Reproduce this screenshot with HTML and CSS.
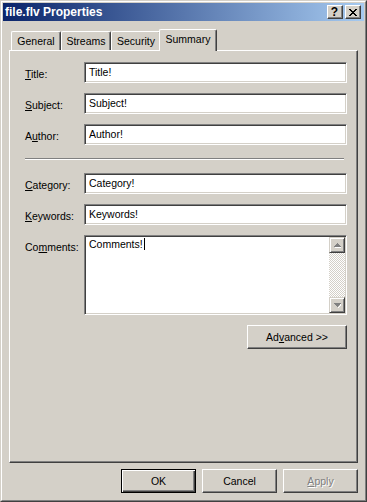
FILE: index.html
```html
<!DOCTYPE html>
<html lang="en">
<head>
<meta charset="utf-8">
<title>file.flv Properties</title>
<link rel="stylesheet" href="styles.css">
</head>
<body>
<div class="window">
  <div class="frame">
    <div class="titlebar">
      <span class="title">file.flv Properties</span>
      <div class="caption-buttons">
        <div class="cap-btn help">?</div>
        <div class="cap-btn close">
          <svg width="8" height="7" viewBox="0 0 8 7" shape-rendering="crispEdges"><path d="M0 0h2v1H0zM6 0h2v1H6zM1 1h2v1H1zM5 1h2v1H5zM2 2h4v1H2zM3 3h2v1H3zM2 4h4v1H2zM1 5h2v1H1zM5 5h2v1H5zM0 6h2v1H0zM6 6h2v1H6z" fill="#000"/></svg>
        </div>
      </div>
    </div>

    <div class="tabs">
      <div class="tab tab-general">General</div>
      <div class="tab tab-streams">Streams</div>
      <div class="tab tab-security">Security</div>
      <div class="tab tab-summary selected">Summary</div>
    </div>

    <div class="panel">
      <div class="form">
        <label class="lbl"><u>T</u>itle:</label>
        <div class="field">Title!</div>
        <label class="lbl"><u>S</u>ubject:</label>
        <div class="field">Subject!</div>
        <label class="lbl">A<u>u</u>thor:</label>
        <div class="field">Author!</div>
        <div class="sep"></div>
        <label class="lbl"><u>C</u>ategory:</label>
        <div class="field">Category!</div>
        <label class="lbl"><u>K</u>eywords:</label>
        <div class="field">Keywords!</div>
        <label class="lbl">Co<u>m</u>ments:</label>
        <div class="memo">
          <div class="memo-text">Comments!<span class="caret"></span></div>
          <div class="scrollbar">
            <div class="sb-btn">
              <svg width="7" height="5" viewBox="0 0 7 5" shape-rendering="crispEdges"><path d="M4 1h1v1H4zM5 2h1v1H5zM6 3h1v1H6zM1 4h7v1H1z" fill="#fff"/><path d="M3 0h1v1H3zM2 1h3v1H2zM1 2h5v1H1zM0 3h7v1H0z" fill="#808080"/></svg>
            </div>
            <div class="sb-track"></div>
            <div class="sb-btn">
              <svg width="7" height="5" viewBox="0 0 7 5" shape-rendering="crispEdges"><path d="M1 1h7v1H1zM6 2h1v1H6zM5 3h1v1H5zM4 4h1v1H4z" fill="#fff"/><path d="M0 0h7v1H0zM1 1h5v1H1zM2 2h3v1H2zM3 3h1v1H3z" fill="#808080"/></svg>
            </div>
          </div>
        </div>
      </div>
      <div class="adv-row">
        <div class="btn adv">Ad<u>v</u>anced &gt;&gt;</div>
      </div>
    </div>

    <div class="dlg-buttons">
      <div class="btn default">OK</div>
      <div class="btn">Cancel</div>
      <div class="btn disabled"><u>A</u>pply</div>
    </div>
  </div>
</div>
</body>
</html>
```

FILE: styles.css
```css
html, body {
  margin: 0;
  padding: 0;
  background: #D4D0C8;
}

body {
  font-family: "Liberation Sans", Arial, sans-serif;
  font-size: 10.5px;
  color: #000;
}

.window {
  width: 367px;
  height: 502px;
  box-sizing: border-box;
  border: 1px solid;
  border-color: #D4D0C8 #404040 #404040 #D4D0C8;
  background: #D4D0C8;
}

.frame {
  height: 100%;
  box-sizing: border-box;
  border: 1px solid;
  border-color: #FFFFFF #808080 #808080 #FFFFFF;
  padding: 1px;
  display: flex;
  flex-direction: column;
}

/* Title bar */
.titlebar {
  flex: none;
  height: 18px;
  display: flex;
  align-items: center;
  justify-content: space-between;
  padding: 0 3px 0 2px;
  background: linear-gradient(to right, #0A246A, #A6CAF0);
}

.title {
  color: #fff;
  font-weight: bold;
  font-size: 12px;
  white-space: nowrap;
}

.caption-buttons {
  display: flex;
  gap: 2px;
}

.cap-btn {
  width: 16px;
  height: 14px;
  box-sizing: border-box;
  background: #D4D0C8;
  border: 1px solid;
  border-color: #FFFFFF #404040 #404040 #FFFFFF;
  box-shadow: inset -1px -1px #808080;
  display: flex;
  align-items: center;
  justify-content: center;
}

.help {
  font-weight: bold;
  font-size: 12px;
  line-height: 12px;
  padding-right: 1px;
}

.close svg {
  display: block;
}

/* Tabs */
.tabs {
  flex: none;
  display: flex;
  align-items: flex-end;
  height: 21px;
  margin: 8px 0 0 8px;
  position: relative;
  z-index: 1;
}

.tab {
  box-sizing: border-box;
  height: 19px;
  padding-top: 3px;
  line-height: 13px;
  text-align: center;
  background: #D4D0C8;
  border-top: 1px solid #FFFFFF;
  border-left: 1px solid #FFFFFF;
  border-right: 1px solid #404040;
  box-shadow: inset -1px 0 #808080;
  border-top-left-radius: 2px;
  border-top-right-radius: 2px;
}

.tab-general { width: 50px; }
.tab-streams { width: 50px; }
.tab-security { width: 50px; }

.tab.selected {
  width: 58px;
  height: 22px;
  margin: 0 0 -1px -2px;
  padding-top: 3px;
  position: relative;
  z-index: 2;
}

/* Tab panel */
.panel {
  flex: none;
  height: 413px;
  margin: 0 6px;
  box-sizing: border-box;
  border: 1px solid;
  border-color: #FFFFFF #404040 #404040 #FFFFFF;
  box-shadow: inset -1px -1px #808080;
  padding: 11px 10px 0 15px;
}

.form {
  display: grid;
  grid-template-columns: 59px 1fr;
  row-gap: 10px;
}

.lbl {
  line-height: 13px;
  padding-top: 6px;
  white-space: nowrap;
}

.field {
  height: 21px;
  box-sizing: border-box;
  background: #fff;
  border: 1px solid;
  border-color: #808080 #FFFFFF #FFFFFF #808080;
  box-shadow: inset 1px 1px #404040, inset -1px -1px #D4D0C8;
  padding: 1px 4px 0 4px;
  line-height: 17px;
  white-space: nowrap;
}

.sep {
  grid-column: 1 / 3;
  height: 0;
  border-top: 1px solid #808080;
  border-bottom: 1px solid #FFFFFF;
  margin: 3px 3px 3px 0;
}

.memo {
  height: 80px;
  box-sizing: border-box;
  background: #fff;
  border: 1px solid;
  border-color: #808080 #FFFFFF #FFFFFF #808080;
  box-shadow: inset 1px 1px #404040, inset -1px -1px #D4D0C8;
  padding: 1px;
  display: flex;
}

.memo-text {
  flex: 1;
  padding: 1px 3px 0 3px;
  line-height: 13px;
}

.caret {
  display: inline-block;
  width: 1px;
  height: 12px;
  background: #000;
  margin-left: 1px;
  vertical-align: -2px;
}

.scrollbar {
  width: 16px;
  display: flex;
  flex-direction: column;
}

.sb-btn {
  flex: none;
  height: 16px;
  box-sizing: border-box;
  background: #D4D0C8;
  border: 1px solid;
  border-color: #D4D0C8 #404040 #404040 #D4D0C8;
  box-shadow: inset 1px 1px #FFFFFF, inset -1px -1px #808080;
  display: flex;
  align-items: center;
  justify-content: center;
}

.sb-track {
  flex: 1;
  background: repeating-conic-gradient(#FFFFFF 0 25%, #D4D0C8 0 50%) 0 0 / 2px 2px;
}

.adv-row {
  display: flex;
  justify-content: flex-end;
  margin-top: 10px;
}

/* Buttons */
.btn {
  box-sizing: border-box;
  width: 75px;
  height: 24px;
  background: #D4D0C8;
  border: 1px solid;
  border-color: #FFFFFF #404040 #404040 #FFFFFF;
  box-shadow: inset -1px -1px #808080;
  display: flex;
  align-items: center;
  justify-content: center;
  white-space: nowrap;
}

.btn.adv {
  width: 100px;
}

.btn.default {
  border: 1px solid #000;
  box-shadow: inset 1px 1px #FFFFFF, inset -1px -1px #404040, inset -2px -2px #808080;
}

.btn.disabled {
  color: #808080;
  text-shadow: 1px 1px #FFFFFF;
}

.dlg-buttons {
  flex: none;
  display: flex;
  justify-content: flex-end;
  gap: 6px;
  margin: 6px 6px 0 0;
}
```
